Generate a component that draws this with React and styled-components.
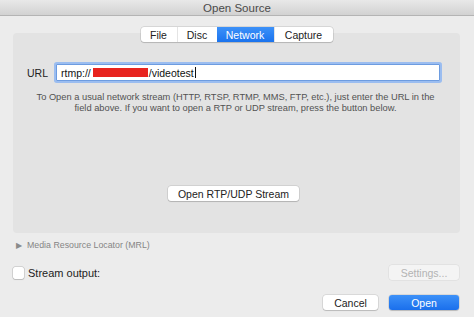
import React from "react"
import styled, { createGlobalStyle } from "styled-components"

const Global = createGlobalStyle`
  html, body { margin: 0; padding: 0; background: #ececec; }
  body { font-family: "Liberation Sans", Arial, sans-serif; }
`

const Window = styled.div`
  width: 474px;
  height: 317px;
  background: #ececec;
  display: flex;
  flex-direction: column;
  overflow: hidden;
`

const TitleBar = styled.div`
  height: 15px;
  flex: none;
  background: linear-gradient(#e8e8e8, #d2d2d2);
  border-bottom: 1px solid #b4b4b4;
  display: flex;
  align-items: center;
  justify-content: center;
  font-size: 11.5px;
  color: #4a4a4a;
`

const Body = styled.div`
  display: flex;
  flex-direction: column;
  padding: 11px 14px 0 13px;
`

const Tabs = styled.div`
  align-self: center;
  position: relative;
  z-index: 1;
  display: flex;
  height: 15px;
  background: #fff;
  border-radius: 3px;
  box-shadow: 0 0 0 0.5px rgba(0, 0, 0, 0.18), 0 1px 1px rgba(0, 0, 0, 0.12);
  overflow: hidden;
`

const Tab = styled.div`
  width: ${p => p.w}px;
  display: flex;
  align-items: center;
  justify-content: center;
  font-size: 10.5px;
  color: ${p => (p.active ? "#fff" : "#222")};
  background: ${p => (p.active ? "linear-gradient(#3d91f8, #1a73ee)" : "transparent")};
  border-left: ${p => (p.first || p.active ? "none" : "1px solid #e4e4e4")};
`

const Panel = styled.div`
  margin-top: -9px;
  height: 200px;
  background: #e3e3e3;
  border-radius: 4px;
  display: flex;
  flex-direction: column;
  align-items: center;
  padding: 31px 20px 0 14px;
  box-sizing: border-box;
`

const UrlRow = styled.div`
  align-self: stretch;
  display: flex;
  align-items: center;
`

const Label = styled.span`
  font-size: 10.5px;
  color: #222;
  margin-right: 8px;
`

const UrlInput = styled.div`
  flex: 1;
  height: 15px;
  background: #fff;
  border: 1px solid #6d9ce0;
  box-shadow: 0 0 0 2px #9bbdf0;
  border-radius: 1px;
  display: flex;
  align-items: center;
  padding-left: 4px;
  font-size: 10.5px;
  color: #111;
`

const Redact = styled.span`
  display: inline-block;
  width: 55px;
  height: 9px;
  margin: 0 1px 0 2px;
  background: #e8231e;
`

const Caret = styled.span`
  display: inline-block;
  width: 1px;
  height: 11px;
  margin-left: 1px;
  background: #111;
`

const Help = styled.div`
  align-self: stretch;
  margin: 11px 0 0 4px;
  font-size: 9.3px;
  line-height: 11px;
  color: #525252;
  text-align: center;
  white-space: nowrap;
`

const Button = styled.div`
  width: ${p => p.w}px;
  height: 15px;
  box-sizing: border-box;
  border-radius: 3px;
  display: flex;
  align-items: center;
  justify-content: center;
  font-size: 10.5px;
  color: ${p => (p.primary ? "#fff" : p.disabled ? "#b3b3b3" : "#222")};
  background: ${p =>
    p.primary
      ? "linear-gradient(#3d91f8, #1a6fec)"
      : p.disabled
      ? "#f4f4f4"
      : "#fff"};
  box-shadow: ${p =>
    p.disabled
      ? "0 0 0 0.5px rgba(0,0,0,0.08)"
      : "0 0 0 0.5px rgba(0,0,0,0.16), 0 1px 1px rgba(0,0,0,0.14)"};
`

const StreamButton = styled(Button)`
  margin-top: 72px;
`

const Disclosure = styled.div`
  margin: 7px 0 0 3px;
  height: 10px;
  display: flex;
  align-items: center;
  font-size: 8.8px;
  color: #858585;
  span { font-size: 7.5px; margin-right: 5px; color: #8a8a8a; }
`

const OutputRow = styled.div`
  margin-top: 15px;
  display: flex;
  align-items: center;
  justify-content: space-between;
  padding-right: 1px;
`

const CheckLabel = styled.label`
  display: flex;
  align-items: center;
  font-size: 11px;
  color: #222;
`

const Box = styled.span`
  width: 11px;
  height: 12px;
  margin-right: 4px;
  border-radius: 2px;
  background: #fff;
  box-shadow: 0 0 0 0.5px rgba(0, 0, 0, 0.22), 0 1px 1px rgba(0, 0, 0, 0.1);
`

const Actions = styled.div`
  margin-top: 15px;
  display: flex;
  justify-content: flex-end;
  gap: 11px;
  padding-right: 1px;
`

export default function App() {
  return (
    <Window>
      <Global />
      <TitleBar>Open Source</TitleBar>
      <Body>
        <Tabs>
          <Tab w={36} first>File</Tab>
          <Tab w={39}>Disc</Tab>
          <Tab w={57} active>Network</Tab>
          <Tab w={58}>Capture</Tab>
        </Tabs>
        <Panel>
          <UrlRow>
            <Label>URL</Label>
            <UrlInput>
              rtmp://<Redact />/videotest<Caret />
            </UrlInput>
          </UrlRow>
          <Help>
            To Open a usual network stream (HTTP, RTSP, RTMP, MMS, FTP, etc.), just enter the URL in the
            <br />
            field above. If you want to open a RTP or UDP stream, press the button below.
          </Help>
          <StreamButton w={131}>Open RTP/UDP Stream</StreamButton>
        </Panel>
        <Disclosure>
          <span>▶</span>Media Resource Locator (MRL)
        </Disclosure>
        <OutputRow>
          <CheckLabel>
            <Box />
            Stream output:
          </CheckLabel>
          <Button w={70} disabled>Settings...</Button>
        </OutputRow>
        <Actions>
          <Button w={55}>Cancel</Button>
          <Button w={70} primary>Open</Button>
        </Actions>
      </Body>
    </Window>
  )
}
